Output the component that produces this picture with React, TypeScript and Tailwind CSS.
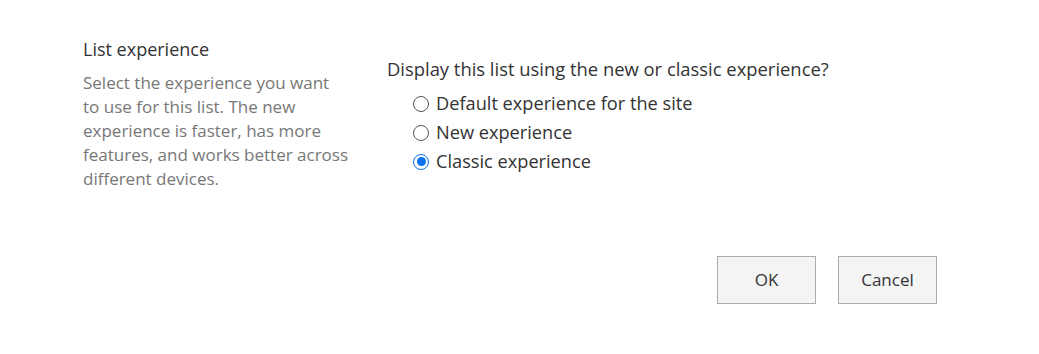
const OPTIONS = ["Default experience for the site", "New experience", "Classic experience"];

function Radio({ checked }: { checked: boolean }) {
  return checked ? (
    <span className="w-[16px] h-[16px] rounded-full border-[1.5px] border-[#0a74f0] flex items-center justify-center shrink-0">
      <span className="w-[9px] h-[9px] rounded-full bg-[#0a74f0]" />
    </span>
  ) : (
    <span className="w-[16px] h-[16px] rounded-full border-[1.5px] border-[#555] shrink-0" />
  );
}

export default function App() {
  return (
    <div className="w-[1039px] h-[354px] bg-white font-['Open_Sans',sans-serif] text-[#333]">
      <div className="flex pt-[37px]">
        <div className="pl-[83px] w-[350px] shrink-0">
          <div className="text-[18px] leading-[24px] text-[#333]">List experience</div>
          <p className="mt-[10px] text-[17px] leading-[24px] text-[#777] whitespace-nowrap">
            Select the experience you want
            <br />
            to use for this list. The new
            <br />
            experience is faster, has more
            <br />
            features, and works better across
            <br />
            different devices.
          </p>
        </div>
        <div className="pl-[37px] pt-[20px]">
          <div className="text-[18.4px] leading-[24px] text-[#333]">Display this list using the new or classic experience?</div>
          <div className="mt-[8px] pl-[26px] flex flex-col">
            {OPTIONS.map((o, i) => (
              <label key={o} className="flex items-center gap-[7px] h-[29px] text-[18.2px]">
                <Radio checked={i === 2} />
                <span>{o}</span>
              </label>
            ))}
          </div>
        </div>
      </div>
      <div className="flex justify-end gap-[22px] pr-[102px] mt-[65px]">
        <button className="w-[99px] h-[48px] border border-[#ababab] bg-[#f4f4f4] text-[17px] text-[#333]">OK</button>
        <button className="w-[99px] h-[48px] border border-[#ababab] bg-[#f4f4f4] text-[17px] text-[#333]">Cancel</button>
      </div>
    </div>
  );
}
